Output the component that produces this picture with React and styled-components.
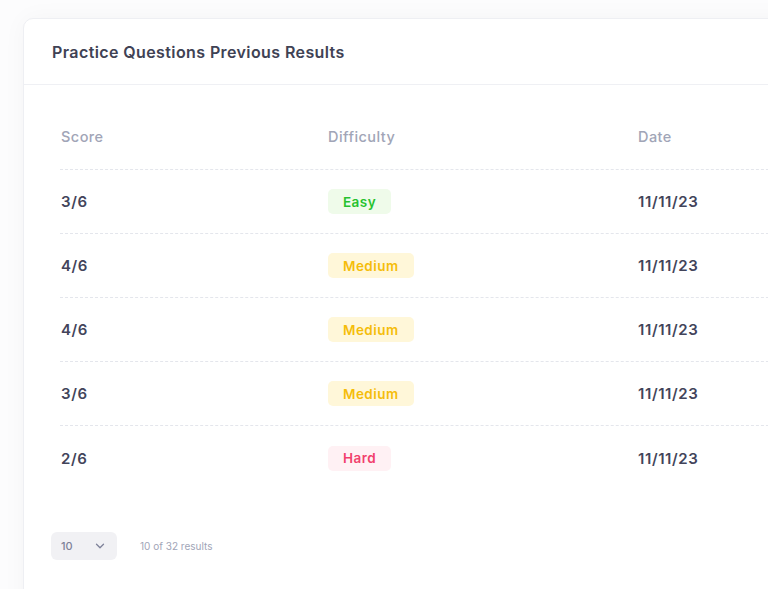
import React from 'react';
import styled, { createGlobalStyle } from 'styled-components';

const Global = createGlobalStyle`
  html, body {
    margin: 0;
    padding: 0;
    background: #fcfcfd;
    overflow: hidden;
  }
  body {
    font-family: Inter, "Noto Sans", sans-serif;
    -webkit-font-smoothing: antialiased;
  }
`;

const Page = styled.div`
  width: 768px;
  height: 589px;
  padding: 18px 0 0 23px;
  box-sizing: border-box;
  overflow: hidden;
`;

const Card = styled.section`
  width: 800px;
  height: 640px;
  background: #ffffff;
  border: 1px solid #eeeff3;
  border-radius: 10px;
  box-shadow: 0 0 24px rgba(30, 30, 60, 0.035);
`;

const CardHeader = styled.header`
  height: 65px;
  display: flex;
  align-items: center;
  padding-left: 28px;
  border-bottom: 1px solid #eff0f4;
`;

const Title = styled.h2`
  margin: 0;
  font-size: 16px;
  font-weight: 600;
  color: #404254;
  letter-spacing: 0.4px;
`;

const CardBody = styled.div`
  padding: 19px 0 0 36px;
`;

const Table = styled.div`
  display: flex;
  flex-direction: column;
`;

const Row = styled.div`
  display: grid;
  grid-template-columns: 267px 310px 1fr;
  align-items: center;
  height: ${p => (p.$head ? '66px' : '64px')};
  border-bottom: ${p => (p.$last ? 'none' : '1px dashed #e4e6ec')};
  box-sizing: border-box;
  padding-left: 1px;
`;

const HeadCell = styled.div`
  font-size: 14.5px;
  font-weight: 500;
  letter-spacing: 0.45px;
  color: #a1a5b7;
`;

const Cell = styled.div`
  font-size: 15px;
  font-weight: 600;
  letter-spacing: 0.6px;
  color: #42445a;
`;

const badgeColors = {
  Easy: { bg: '#effbea', fg: '#26c22e' },
  Medium: { bg: '#fff7d9', fg: '#f5bd0a' },
  Hard: { bg: '#fff1f4', fg: '#f1416c' },
};

const Badge = styled.span`
  display: inline-flex;
  align-items: center;
  height: 25px;
  padding: 0 15px;
  border-radius: 5px;
  font-size: 13.5px;
  font-weight: 600;
  letter-spacing: 0.45px;
  background: ${p => badgeColors[p.$level].bg};
  color: ${p => badgeColors[p.$level].fg};
`;

const Footer = styled.div`
  display: flex;
  align-items: center;
  gap: 23px;
  margin: 42px 0 0 27px;
`;

const Select = styled.div`
  width: 66px;
  height: 28px;
  box-sizing: border-box;
  display: flex;
  align-items: center;
  justify-content: space-between;
  padding: 0 10px 0 10px;
  background: #f1f1f4;
  border-radius: 6px;
  font-size: 11px;
  font-weight: 500;
  color: #7e8299;
`;

const Results = styled.span`
  font-size: 10px;
  color: #a1a5b7;
`;

const rows = [
  { score: '3/6', level: 'Easy', date: '11/11/23' },
  { score: '4/6', level: 'Medium', date: '11/11/23' },
  { score: '4/6', level: 'Medium', date: '11/11/23' },
  { score: '3/6', level: 'Medium', date: '11/11/23' },
  { score: '2/6', level: 'Hard', date: '11/11/23' },
];

function Chevron() {
  return (
    <svg width="14" height="14" viewBox="0 0 24 24" fill="none" stroke="#7e8299" strokeWidth="2.2" strokeLinecap="round" strokeLinejoin="round">
      <polyline points="6 9 12 15 18 9" />
    </svg>
  );
}

export default function App() {
  return (
    <Page>
      <Global />
      <Card>
        <CardHeader>
          <Title>Practice Questions Previous Results</Title>
        </CardHeader>
        <CardBody>
          <Table>
            <Row $head>
              <HeadCell>Score</HeadCell>
              <HeadCell>Difficulty</HeadCell>
              <HeadCell>Date</HeadCell>
            </Row>
            {rows.map((r, i) => (
              <Row key={i} $last={i === rows.length - 1}>
                <Cell>{r.score}</Cell>
                <div><Badge $level={r.level}>{r.level}</Badge></div>
                <Cell>{r.date}</Cell>
              </Row>
            ))}
          </Table>
        </CardBody>
        <Footer>
          <Select>
            <span>10</span>
            <Chevron />
          </Select>
          <Results>10 of 32 results</Results>
        </Footer>
      </Card>
    </Page>
  );
}
